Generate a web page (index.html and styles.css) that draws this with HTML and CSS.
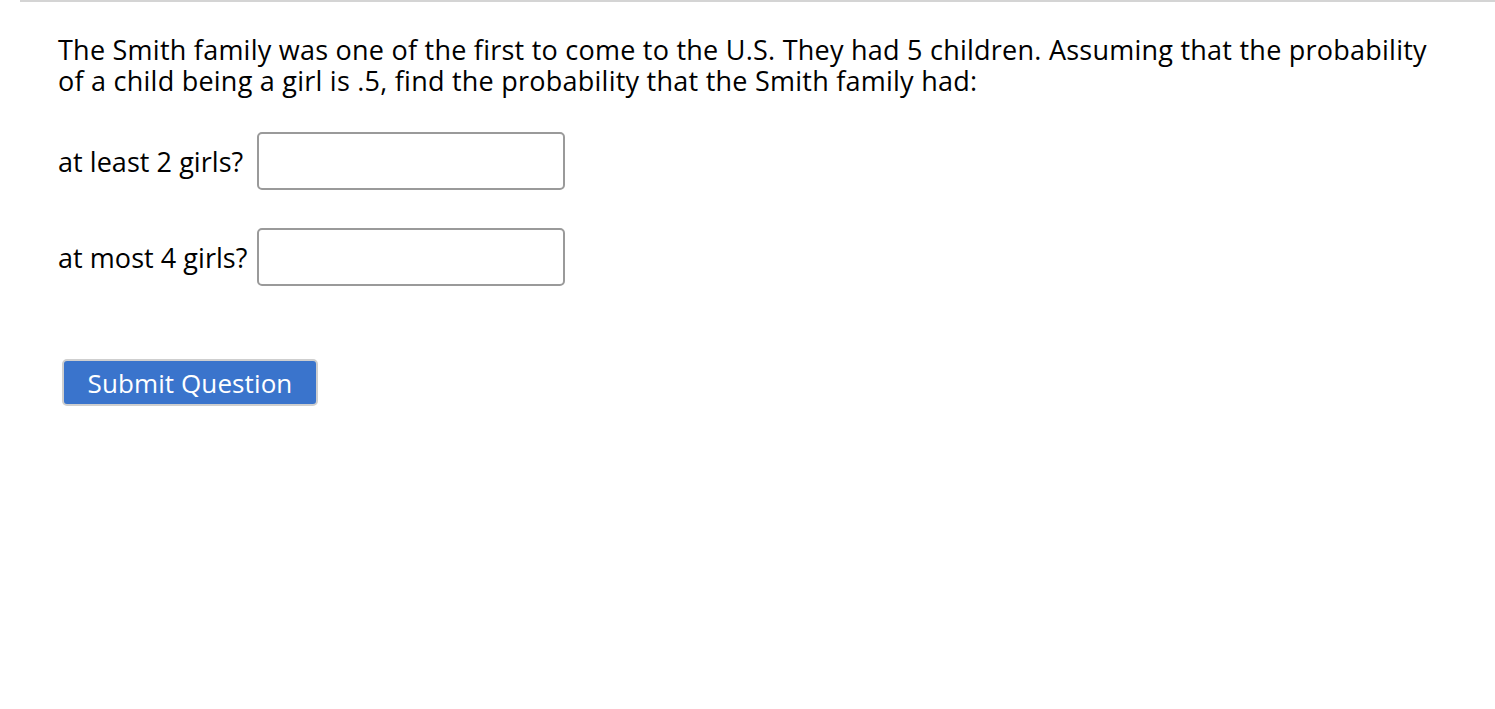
FILE: index.html
```html
<!DOCTYPE html>
<html>
<head>
<meta charset="utf-8">
<link rel="stylesheet" href="styles.css">
</head>
<body>
<div class="rule"></div>
<div class="question">
  <p class="prompt">The Smith family was one of the first to come to the U.S. They had 5 children. Assuming that the probability of a child being a girl is .5, find the probability that the Smith family had:</p>
  <div class="row"><span class="label">at least 2 girls?</span><input class="answer" type="text"></div>
  <div class="row"><span class="label">at most 4 girls?</span><input class="answer" type="text"></div>
  <button class="submit">Submit Question</button>
</div>
</body>
</html>
```
FILE: styles.css
```css
html, body {
  margin: 0;
  padding: 0;
  background: #fff;
}
body {
  font-family: "Open Sans", sans-serif;
  color: #000;
  font-size: 27px;
  letter-spacing: 0.24px;
}
.rule {
  margin-left: 20px;
  height: 2px;
  background: #d4d4d4;
}
.question {
  padding: 32px 58px 0 58px;
}
.prompt {
  margin: 0;
  line-height: 31px;
}
.row {
  display: flex;
  align-items: center;
  gap: 10px;
  margin-top: 36px;
}
.row + .row {
  margin-top: 38px;
}
.label {
  line-height: 31px;
  letter-spacing: 0.05px;
  min-width: 189px;
}
.answer {
  width: 308px;
  height: 58px;
  box-sizing: border-box;
  border: 2px solid #9a9a9a;
  border-radius: 5px;
  font-size: 24px;
  padding: 0 8px;
  margin: 0;
}
.submit {
  display: block;
  margin: 73px 0 0 4px;
  width: 256px;
  height: 47px;
  box-sizing: border-box;
  background: #3a74cc;
  color: #fff;
  border: 2px solid #cfcfcf;
  border-radius: 5px;
  font-family: inherit;
  font-size: 26px;
  letter-spacing: 0.1px;
  padding: 0;
}
```
